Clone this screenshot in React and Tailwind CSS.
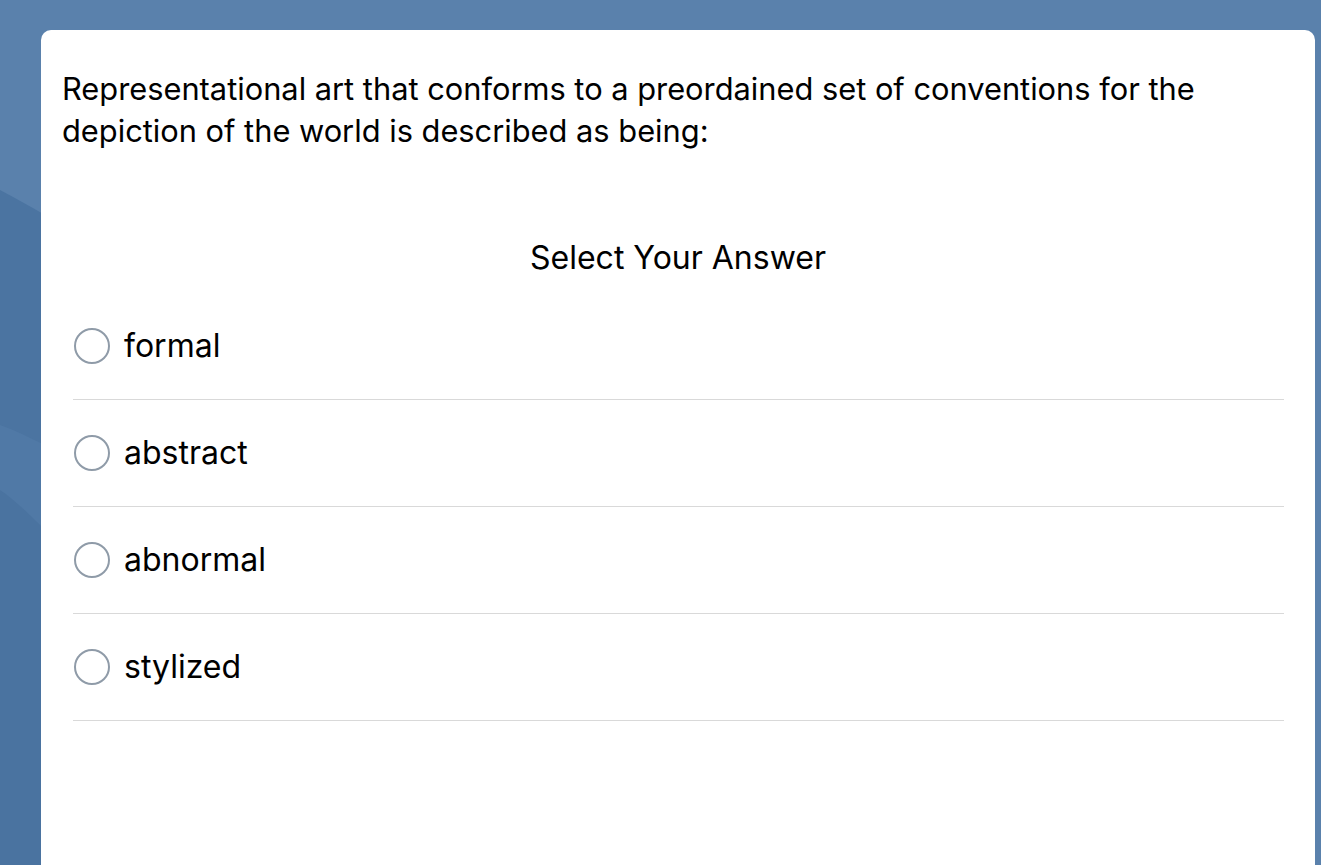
const question =
  'Representational art that conforms to a preordained set of conventions for the depiction of the world is described as being:'

const answers = ['formal', 'abstract', 'abnormal', 'stylized']

const AnswerRow = ({ label }) => (
  <label className="flex flex-col">
    <div className="flex items-center h-[106px] pl-[1px]">
      <span className="w-[36px] h-[36px] rounded-full border-2 border-[#8f9ba8] bg-white shrink-0" />
      <span className="ml-[14px] text-[32px] leading-none text-black">{label}</span>
    </div>
    <div className="h-px bg-[#d9d9d9]" />
  </label>
)

export default function App() {
  return (
    <div
      className="relative w-[1321px] h-[865px] overflow-hidden bg-[#5a81ac]"
      style={{ fontFamily: 'Inter, "Noto Sans", sans-serif' }}
    >
      {/* backdrop waves */}
      <svg className="absolute inset-0" width="1321" height="865" viewBox="0 0 1321 865">
        <path d="M0 190 C 15 198, 30 206, 45 215 L45 865 L0 865 Z" fill="#4b74a1" />
        <path d="M0 425 C 15 430, 30 438, 45 445 L45 865 L0 865 Z" fill="#5079a6" />
        <path d="M0 490 C 15 500, 30 515, 45 530 L45 865 L0 865 Z" fill="#4a73a0" />
      </svg>

      <div className="relative pt-[30px] pl-[41px] pr-[6px]">
        <div className="bg-white rounded-t-[10px] h-[835px] pt-[38px] px-[21px]">
          <p className="text-[30.8px] leading-[42px] text-black max-w-[1200px]">{question}</p>

          <h2 className="mt-[90px] text-center text-[32px] leading-none text-black">Select Your Answer</h2>

          <div className="mt-[19px] pl-[11px] pr-[10px] flex flex-col">
            {answers.map((a) => (
              <AnswerRow key={a} label={a} />
            ))}
          </div>
        </div>
      </div>
    </div>
  )
}
